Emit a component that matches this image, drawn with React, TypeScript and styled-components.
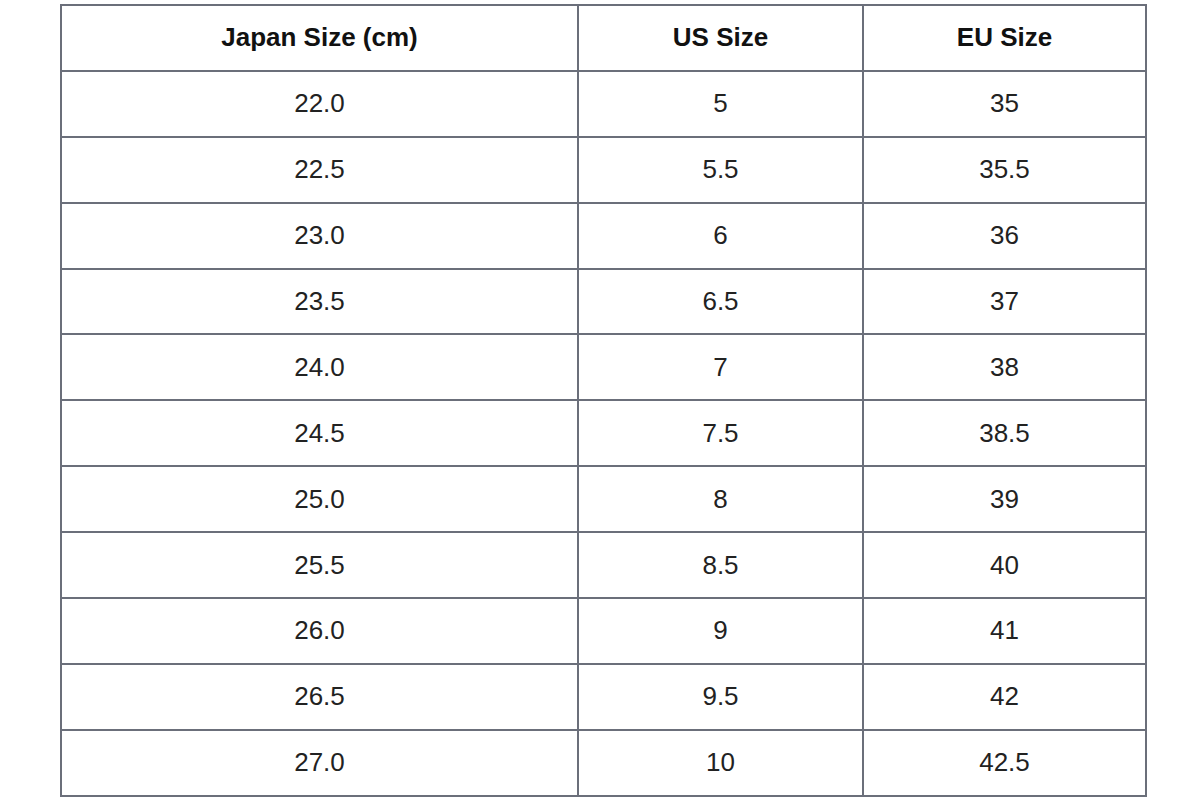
import React from "react";
import styled, { createGlobalStyle } from "styled-components";

const Global = createGlobalStyle`
  html, body { margin: 0; padding: 0; background: #ffffff; }
  body { font-family: "Liberation Sans", Arial, sans-serif; }
`;

const Page = styled.div`
  width: 1200px;
  height: 800px;
  padding: 4px 0 0 60px;
  box-sizing: border-box;
  background: #fff;
`;

const Table = styled.table`
  border-collapse: collapse;
  table-layout: fixed;
  width: 1085px;
  font-family: "Liberation Sans", Arial, sans-serif;
  color: #1e1e1e;
`;

const Cell = styled.td<{ $head?: boolean }>`
  border: 2px solid #6b6f7a;
  height: 63.9px;
  padding: 0;
  text-align: center;
  vertical-align: middle;
  font-size: 26px;
  font-weight: ${(p) => (p.$head ? 700 : 400)};
  color: ${(p) => (p.$head ? "#111" : "#222")};
`;

const rows: [string, string, string][] = [
  ["22.0", "5", "35"],
  ["22.5", "5.5", "35.5"],
  ["23.0", "6", "36"],
  ["23.5", "6.5", "37"],
  ["24.0", "7", "38"],
  ["24.5", "7.5", "38.5"],
  ["25.0", "8", "39"],
  ["25.5", "8.5", "40"],
  ["26.0", "9", "41"],
  ["26.5", "9.5", "42"],
  ["27.0", "10", "42.5"],
];

export default function App() {
  return (
    <>
      <Global />
      <Page>
        <Table>
          <colgroup>
            <col style={{ width: 517 }} />
            <col style={{ width: 285 }} />
            <col style={{ width: 283 }} />
          </colgroup>
          <thead>
            <tr>
              <Cell as="th" $head>Japan Size (cm)</Cell>
              <Cell as="th" $head>US Size</Cell>
              <Cell as="th" $head>EU Size</Cell>
            </tr>
          </thead>
          <tbody>
            {rows.map((r) => (
              <tr key={r[0]}>
                <Cell>{r[0]}</Cell>
                <Cell>{r[1]}</Cell>
                <Cell>{r[2]}</Cell>
              </tr>
            ))}
          </tbody>
        </Table>
      </Page>
    </>
  );
}
